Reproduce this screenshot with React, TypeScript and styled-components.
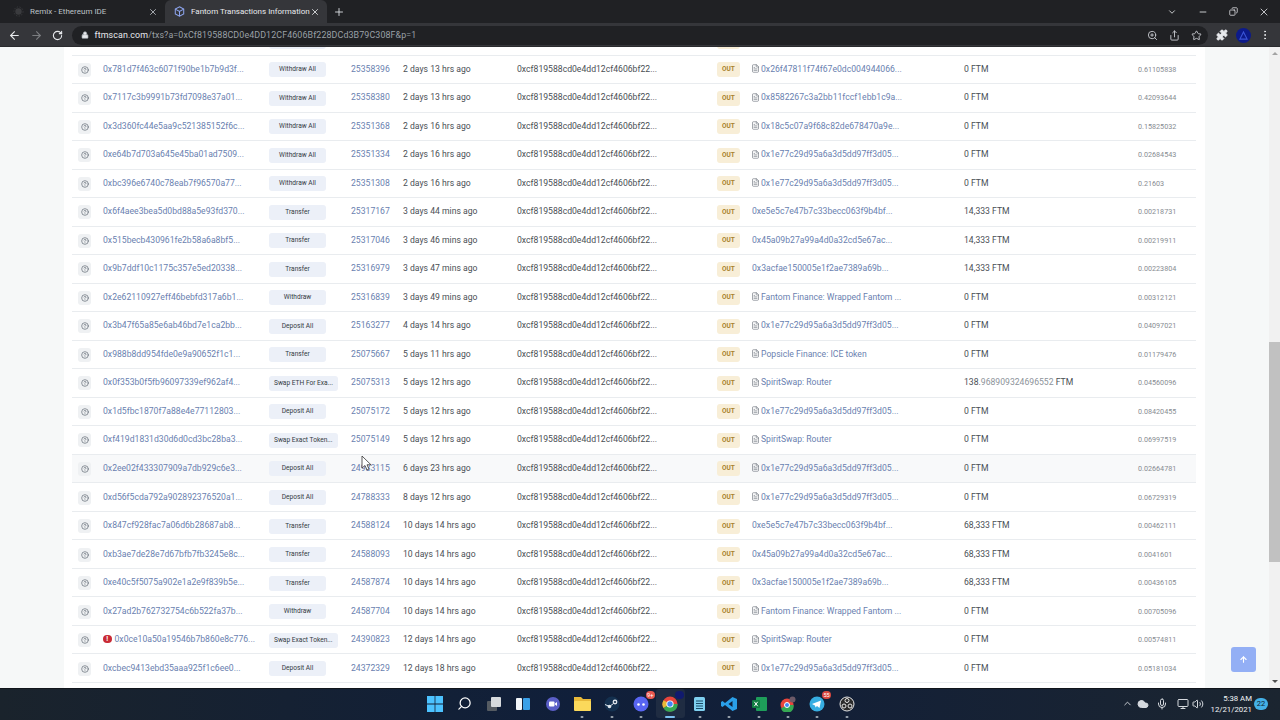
import * as React from 'react';
import styled, {createGlobalStyle} from 'styled-components';
import {ArrowLeft, ArrowRight, RotateCw, Lock, ZoomIn, Share, Star, Puzzle, MoreVertical, X, Plus, ChevronDown, Minus, Copy, ArrowUp, FileText, HelpCircle, Search, Mic, Volume2, ChevronUp, Cloud, Monitor} from 'lucide-react';

const GlobalStyle = createGlobalStyle`
  html, body { margin: 0; padding: 0; width: 1280px; height: 720px; overflow: hidden; background: #f6f8f8; }
  body { font-family: Roboto, "Liberation Sans", sans-serif; }
`;

type Tx = {
    hash: string;
    method: string;
    block: string;
    age: string;
    to: string;
    contract?: boolean;
    value: string;
    fee: string;
    failed?: boolean;
    hover?: boolean;
};

const from = '0xcf819588cd0e4dd12cf4606bf22...';
const vault = '0x1e77c29d95a6a3d5dd97ff3d05...';
const wftm = 'Fantom Finance: Wrapped Fantom ...';
const router = 'SpiritSwap: Router';

const txs: Tx[] = [
    {hash: '0x781d7f463c6071f90be1b7b9d3f...', method: 'Withdraw All', block: '25358396', age: '2 days 13 hrs ago', to: '0x26f47811f74f67e0dc004944066...', contract: true, value: '0 FTM', fee: '0.61105838'},
    {hash: '0x7117c3b9991b73fd7098e37a01...', method: 'Withdraw All', block: '25358380', age: '2 days 13 hrs ago', to: '0x8582267c3a2bb11fccf1ebb1c9a...', contract: true, value: '0 FTM', fee: '0.42093644'},
    {hash: '0x3d360fc44e5aa9c521385152f6c...', method: 'Withdraw All', block: '25351368', age: '2 days 16 hrs ago', to: '0x18c5c07a9f68c82de678470a9e...', contract: true, value: '0 FTM', fee: '0.15825032'},
    {hash: '0xe64b7d703a645e45ba01ad7509...', method: 'Withdraw All', block: '25351334', age: '2 days 16 hrs ago', to: vault, contract: true, value: '0 FTM', fee: '0.02684543'},
    {hash: '0xbc396e6740c78eab7f96570a77...', method: 'Withdraw All', block: '25351308', age: '2 days 16 hrs ago', to: vault, contract: true, value: '0 FTM', fee: '0.21603'},
    {hash: '0x6f4aee3bea5d0bd88a5e93fd370...', method: 'Transfer', block: '25317167', age: '3 days 44 mins ago', to: '0xe5e5c7e47b7c33becc063f9b4bf...', value: '14,333 FTM', fee: '0.00218731'},
    {hash: '0x515becb430961fe2b58a6a8bf5...', method: 'Transfer', block: '25317046', age: '3 days 46 mins ago', to: '0x45a09b27a99a4d0a32cd5e67ac...', value: '14,333 FTM', fee: '0.00219911'},
    {hash: '0x9b7ddf10c1175c357e5ed20338...', method: 'Transfer', block: '25316979', age: '3 days 47 mins ago', to: '0x3acfae150005e1f2ae7389a69b...', value: '14,333 FTM', fee: '0.00223804'},
    {hash: '0x2e62110927eff46bebfd317a6b1...', method: 'Withdraw', block: '25316839', age: '3 days 49 mins ago', to: wftm, contract: true, value: '0 FTM', fee: '0.00312121'},
    {hash: '0x3b47f65a85e6ab46bd7e1ca2bb...', method: 'Deposit All', block: '25163277', age: '4 days 14 hrs ago', to: vault, contract: true, value: '0 FTM', fee: '0.04097021'},
    {hash: '0x988b8dd954fde0e9a90652f1c1...', method: 'Transfer', block: '25075667', age: '5 days 11 hrs ago', to: 'Popsicle Finance: ICE token', contract: true, value: '0 FTM', fee: '0.01179476'},
    {hash: '0x0f353b0f5fb96097339ef962af4...', method: 'Swap ETH For Exa...', block: '25075313', age: '5 days 12 hrs ago', to: router, contract: true, value: '138.968909324696552 FTM', fee: '0.04560096'},
    {hash: '0x1d5fbc1870f7a88e4e77112803...', method: 'Deposit All', block: '25075172', age: '5 days 12 hrs ago', to: vault, contract: true, value: '0 FTM', fee: '0.08420455'},
    {hash: '0xf419d1831d30d6d0cd3bc28ba3...', method: 'Swap Exact Token...', block: '25075149', age: '5 days 12 hrs ago', to: router, contract: true, value: '0 FTM', fee: '0.06997519'},
    {hash: '0x2ee02f433307909a7db929c6e3...', method: 'Deposit All', block: '24983115', age: '6 days 23 hrs ago', to: vault, contract: true, value: '0 FTM', fee: '0.02664781', hover: true},
    {hash: '0xd56f5cda792a902892376520a1...', method: 'Deposit All', block: '24788333', age: '8 days 12 hrs ago', to: vault, contract: true, value: '0 FTM', fee: '0.06729319'},
    {hash: '0x847cf928fac7a06d6b28687ab8...', method: 'Transfer', block: '24588124', age: '10 days 14 hrs ago', to: '0xe5e5c7e47b7c33becc063f9b4bf...', value: '68,333 FTM', fee: '0.00462111'},
    {hash: '0xb3ae7de28e7d67bfb7fb3245e8c...', method: 'Transfer', block: '24588093', age: '10 days 14 hrs ago', to: '0x45a09b27a99a4d0a32cd5e67ac...', value: '68,333 FTM', fee: '0.0041601'},
    {hash: '0xe40c5f5075a902e1a2e9f839b5e...', method: 'Transfer', block: '24587874', age: '10 days 14 hrs ago', to: '0x3acfae150005e1f2ae7389a69b...', value: '68,333 FTM', fee: '0.00436105'},
    {hash: '0x27ad2b762732754c6b522fa37b...', method: 'Withdraw', block: '24587704', age: '10 days 14 hrs ago', to: wftm, contract: true, value: '0 FTM', fee: '0.00705096'},
    {hash: '0x0ce10a50a19546b7b860e8c776...', method: 'Swap Exact Token...', block: '24390823', age: '12 days 14 hrs ago', to: router, contract: true, value: '0 FTM', fee: '0.00574811', failed: true},
    {hash: '0xcbec9413ebd35aaa925f1c6ee0...', method: 'Deposit All', block: '24372329', age: '12 days 18 hrs ago', to: vault, contract: true, value: '0 FTM', fee: '0.05181034'},
];

const Screen = styled.div`
  width: 1280px;
  height: 720px;
  display: flex;
  flex-direction: column;
  position: relative;
  overflow: hidden;
`;

const TabBar = styled.div`
  height: 23px;
  flex: none;
  background: #202124;
  display: flex;
  align-items: flex-end;
  color: #dee1e6;
  font-size: 8px;
`;

const Tab = styled.div<{$active?: boolean}>`
  width: ${p => p.$active ? '162px' : '157px'};
  height: 23px;
  padding: 0 7px 0 ${p => p.$active ? '9px' : '5px'};
  margin-left: ${p => p.$active ? '0' : '8px'};
  box-sizing: border-box;
  display: flex;
  align-items: center;
  gap: 6px;
  border-radius: 6px 6px 0 0;
  background: ${p => p.$active ? '#35363a' : 'transparent'};
  color: ${p => p.$active ? '#e8eaed' : '#bdc1c6'};
`;

const TabTitle = styled.span`
  flex: 1;
  min-width: 0;
  white-space: nowrap;
`;

const NewTab = styled.div`
  width: 24px;
  height: 23px;
  display: flex;
  align-items: center;
  justify-content: center;
`;

const WindowControls = styled.div`
  margin-left: auto;
  height: 23px;
  padding-right: 1px;
  display: flex;
  align-items: center;
  color: #e8eaed;
`;

const WindowButton = styled.div`
  width: 30.5px;
  display: flex;
  justify-content: center;
`;

const RestoreIcon = styled(Copy)`
  transform: scaleX(-1);
`;

const Toolbar = styled.div`
  height: 24px;
  flex: none;
  background: #35363a;
  display: flex;
  align-items: center;
  color: #e8eaed;
  box-shadow: inset 0 -1px 0 #2a2b2e;
`;

const NavButton = styled.div<{$dim?: boolean}>`
  width: 21.5px;
  display: flex;
  justify-content: center;
  color: ${p => p.$dim ? '#7b7d80' : '#e8eaed'};
  &:first-child { margin-left: 4px; }
`;

const Omnibox = styled.div`
  width: 1136px;
  height: 19px;
  margin-left: 3px;
  border-radius: 10px;
  background: #202124;
  display: flex;
  align-items: center;
  box-sizing: border-box;
  padding: 0 6px 0 9px;
  font-size: 8.9px;
  color: #9aa0a6;
  letter-spacing: .1px;
`;

const LockIcon = styled(Lock)`
  margin-right: 6px;
`;

const Domain = styled.span`
  color: #e8eaed;
`;

const OmniIcons = styled.div`
  margin-left: auto;
  display: flex;
  gap: 11px;
  color: #c8cbd0;
`;

const ToolbarEnd = styled.div`
  display: flex;
  align-items: center;
  gap: 8px;
  margin-left: 8px;
`;

const Avatar = styled.div`
  width: 15px;
  height: 15px;
  border-radius: 50%;
  background: #0c1a8a;
  display: flex;
  align-items: center;
  justify-content: center;
`;

const Page = styled.div`
  flex: 1;
  min-height: 0;
  display: flex;
  background: #f6f8f8;
`;

const Content = styled.div`
  flex: 1;
  padding-left: 64px;
  overflow: hidden;
`;

const Card = styled.div`
  width: 1141px;
  background: #fff;
  padding: 0 8px 20px 8px;
  box-sizing: border-box;
  margin-top: -20px;
`;

const Row = styled.div<{$hover?: boolean}>`
  display: grid;
  grid-template-columns: 31px 166px 82px 52px 114px 200px 35px 212px 174px 58px;
  align-items: center;
  width: 1124px;
  height: 28.52px;
  box-sizing: border-box;
  border-bottom: 1px solid #e9ecef;
  background: ${p => p.$hover ? '#f8f9fa' : 'transparent'};
  font-size: 8.65px;
  color: #4a4f55;
  white-space: nowrap;
`;

const HelpChip = styled.div`
  width: 13px;
  height: 14px;
  margin-left: 6px;
  margin-top: 1px;
  border-radius: 3px;
  background: #eff1f3;
  color: #5c6570;
  display: flex;
  align-items: center;
  justify-content: center;
`;

const HashCell = styled.div`
  display: flex;
  align-items: center;
  gap: 3px;
  color: #6a7fb0;
  margin-top: -1px;
`;

const ErrorDot = styled.span`
  width: 8.5px;
  height: 8.5px;
  border-radius: 50%;
  background: #c92a35;
  color: #fff;
  font-size: 7px;
  font-weight: 700;
  line-height: 8.5px;
  text-align: center;
`;

const MethodCell = styled.div`
  display: flex;
  margin-top: 1px;
`;

const MethodBadge = styled.span`
  min-width: 57px;
  height: 15px;
  padding: 0 5px;
  box-sizing: border-box;
  border-radius: 3px;
  background: #ecf0f8;
  color: #333a42;
  font-size: 6.6px;
  text-align: center;
  line-height: 15px;
`;

const BlockCell = styled.div`
  color: #6a7fb0;
  margin-top: -1px;
`;

const TextCell = styled.div`
  margin-top: -1px;
`;

const OutBadge = styled.span`
  width: 23px;
  height: 15px;
  margin-top: 1px;
  border-radius: 3px;
  background: #f8eed7;
  color: #a9822c;
  font-size: 6.5px;
  font-weight: 700;
  text-align: center;
  line-height: 15px;
`;

const ToCell = styled.div`
  display: flex;
  align-items: center;
  gap: 1px;
  color: #6a7fb0;
  margin-top: -1px;
  svg { color: #59616b; margin-left: -1px; }
`;

const Dim = styled.span`
  color: #8d939a;
`;

const FeeCell = styled.div`
  font-size: 7.2px;
  color: #878c92;
`;

const Scrollbar = styled.div`
  width: 11px;
  flex: none;
  background: #f1f1f1;
  display: flex;
  flex-direction: column;
  align-items: center;
`;

const ScrollArrow = styled.div<{$down?: boolean}>`
  width: 0;
  height: 0;
  border-left: 3px solid transparent;
  border-right: 3px solid transparent;
  ${p => p.$down ? 'border-top: 3px solid #505050;' : 'border-bottom: 3px solid #a3a3a3;'}
  margin: 5px 0;
`;

const ScrollThumb = styled.div`
  width: 100%;
  height: 220px;
  margin-top: 282px;
  margin-bottom: auto;
  background: #c1c1c1;
`;

const ToTop = styled.div`
  position: absolute;
  left: 1231px;
  top: 647px;
  width: 25px;
  height: 25px;
  border-radius: 3px;
  background: #93aff5;
  color: #fff;
  display: flex;
  align-items: center;
  justify-content: center;
`;

const Pointer = styled.svg`
  position: absolute;
  left: 361px;
  top: 455px;
`;

const Taskbar = styled.div`
  height: 32px;
  flex: none;
  background: linear-gradient(90deg, #1a232c 0%, #101f3a 45%, #121f38 60%, #1b2530 100%);
  border-top: 1px solid #11151b;
  box-sizing: border-box;
  padding-bottom: 2px;
  display: grid;
  grid-template-columns: 1fr auto 1fr;
  align-items: center;
  color: #fff;
`;

const TaskIcons = styled.div`
  grid-column: 2;
  margin-left: 2px;
  display: flex;
  align-items: center;
`;

const TaskIcon = styled.div<{$active?: boolean; $open?: boolean}>`
  width: 29.4px;
  height: 29px;
  display: flex;
  align-items: center;
  justify-content: center;
  position: relative;
  background: ${p => p.$active ? '#1f2c42' : 'transparent'};
  border-radius: 3px;
  &::after {
    content: '';
    display: ${p => p.$open || p.$active ? 'block' : 'none'};
    position: absolute;
    bottom: 0;
    left: 50%;
    height: 2px;
    width: ${p => p.$active ? '10px' : '3px'};
    transform: translateX(-50%);
    border-radius: 1px;
    background: ${p => p.$active ? '#7cc0f0' : '#9aa3ad'};
  }
`;

const SearchIcon = styled(Search)`
  transform: scaleX(-1);
`;

const Count = styled.span<{$bg: string}>`
  position: absolute;
  top: 2px;
  right: 1px;
  min-width: 9px;
  height: 8px;
  border-radius: 4px;
  background: ${p => p.$bg};
  color: #fff;
  font-size: 5.5px;
  line-height: 8px;
  text-align: center;
`;

const Tray = styled.div`
  grid-column: 3;
  justify-self: end;
  display: flex;
  align-items: center;
  padding-right: 12px;
  color: #d5d9de;
`;

const TrayIcon = styled.div<{$gap: number}>`
  display: flex;
  margin-left: ${p => p.$gap}px;
`;

const Clock = styled.div`
  font-size: 7.8px;
  line-height: 11px;
  text-align: right;
  color: #f2f4f6;
  margin-left: 7px;
`;

const Notify = styled.div`
  width: 14px;
  height: 12px;
  border-radius: 6px;
  background: #44b0e6;
  color: #10202e;
  font-size: 7.5px;
  line-height: 12px;
  text-align: center;
  margin-left: 2px;
`;

const TxRow = ({tx}: {tx: Tx}) => {
    const dot = tx.value.indexOf('.');
    return <Row $hover={tx.hover}>
        <HelpChip><HelpCircle size={8} strokeWidth={2}/></HelpChip>
        <HashCell>
            {tx.failed && <ErrorDot>!</ErrorDot>}
            {tx.hash}
        </HashCell>
        <MethodCell><MethodBadge>{tx.method}</MethodBadge></MethodCell>
        <BlockCell>{tx.block}</BlockCell>
        <TextCell>{tx.age}</TextCell>
        <TextCell>{from}</TextCell>
        <OutBadge>OUT</OutBadge>
        <ToCell>
            {tx.contract && <FileText size={9} strokeWidth={1.5}/>}
            {tx.to}
        </ToCell>
        <TextCell>
            {dot > 0
                ? <>{tx.value.slice(0, dot)}.<Dim>{tx.value.slice(dot + 1, -4)}</Dim>{tx.value.slice(-4)}</>
                : tx.value}
        </TextCell>
        <FeeCell>{tx.fee}</FeeCell>
    </Row>;
};

// only the bottom edge of this row shows under the toolbar, so its badges stay empty
const ScrolledOffRow = () => <Row>
    <span/>
    <span/>
    <MethodCell><MethodBadge/></MethodCell>
    <span/>
    <span/>
    <span/>
    <OutBadge/>
</Row>;

const App = () => {
    return <Screen>
        <GlobalStyle/>
        <TabBar>
            <Tab>
                <svg width="11" height="11" viewBox="0 0 12 12"><circle cx="6" cy="6" r="3.5" fill="#3a3b3e"/><circle cx="6" cy="6" r="5" fill="none" stroke="#3a3b3e" strokeDasharray="1.5 1.5"/></svg>
                <TabTitle>Remix - Ethereum IDE</TabTitle>
                <X size={10} strokeWidth={2}/>
            </Tab>
            <Tab $active>
                <svg width="11" height="11" viewBox="0 0 12 12" fill="none" stroke="#8ea6f0" strokeWidth="1.1"><path d="M6 .8 10.6 3.4V8.6L6 11.2 1.4 8.6V3.4Z"/><path d="M1.4 3.4 6 6l4.6-2.6M6 6v5.2"/></svg>
                <TabTitle>Fantom Transactions Information</TabTitle>
                <X size={10} strokeWidth={2}/>
            </Tab>
            <NewTab><Plus size={12} strokeWidth={1.8}/></NewTab>
            <WindowControls>
                <WindowButton><ChevronDown size={10}/></WindowButton>
                <WindowButton><Minus size={10}/></WindowButton>
                <WindowButton><RestoreIcon size={9}/></WindowButton>
                <WindowButton><X size={12} strokeWidth={1.6}/></WindowButton>
            </WindowControls>
        </TabBar>
        <Toolbar>
            <NavButton><ArrowLeft size={13}/></NavButton>
            <NavButton $dim><ArrowRight size={13}/></NavButton>
            <NavButton><RotateCw size={11} strokeWidth={2.4}/></NavButton>
            <Omnibox>
                <LockIcon size={8} fill="#e8eaed"/>
                <Domain>ftmscan.com</Domain>
                <span>/txs?a=0xCf819588CD0e4DD12CF4606Bf228DCd3B79C308F&amp;p=1</span>
                <OmniIcons>
                    <ZoomIn size={11}/>
                    <Share size={11}/>
                    <Star size={11}/>
                </OmniIcons>
            </Omnibox>
            <ToolbarEnd>
                <Puzzle size={12} fill="#e8eaed"/>
                <Avatar>
                    <svg width="9" height="9" viewBox="0 0 10 10" fill="none" stroke="#3b55d8" strokeWidth="1.2"><path d="M5 1 9 9H1Z"/></svg>
                </Avatar>
                <MoreVertical size={12}/>
            </ToolbarEnd>
        </Toolbar>
        <Page>
            <Content>
                <Card>
                    <ScrolledOffRow/>
                    {txs.map(tx => <TxRow key={tx.hash} tx={tx}/>)}
                </Card>
            </Content>
            <Scrollbar>
                <ScrollArrow/>
                <ScrollThumb/>
                <ScrollArrow $down/>
            </Scrollbar>
        </Page>
        <ToTop><ArrowUp size={9} strokeWidth={3}/></ToTop>
        <Pointer width="11" height="16" viewBox="0 0 11 16"><path d="M1 1V13L4 10.5 6 15 8 14 6 9.8H10Z" fill="#fff" stroke="#333" strokeWidth=".8"/></Pointer>
        <Taskbar>
            <TaskIcons>
                <TaskIcon>
                    <svg width="16" height="16" viewBox="0 0 16 16" fill="#4cc2ff"><path d="M0 0h7.6v7.6H0zM8.400 0H16v7.6H8.400zM0 8.400h7.6V16H0zM8.400 8.400H16V16H8.400z"/></svg>
                </TaskIcon>
                <TaskIcon><SearchIcon size={15} strokeWidth={2}/></TaskIcon>
                <TaskIcon>
                    <svg width="16" height="16" viewBox="0 0 16 16"><rect x="1" y="5" width="10" height="10" rx="1" fill="#555b62"/><rect x="5" y="1" width="10" height="10" rx="1" fill="#d7dadd"/></svg>
                </TaskIcon>
                <TaskIcon>
                    <svg width="16" height="16" viewBox="0 0 16 16"><rect x="1" y="2" width="6" height="12" rx="1" fill="#f2f6fa"/><rect x="8" y="2" width="7" height="12" rx="1" fill="#3aa0e8"/></svg>
                </TaskIcon>
                <TaskIcon>
                    <svg width="16" height="16" viewBox="0 0 16 16"><circle cx="8" cy="8" r="7" fill="#5b5fc7"/><rect x="4" y="5.500" width="5.500" height="5" rx="1" fill="#fff"/><path d="M10 7.500 12 6v4L10 8.500Z" fill="#fff"/></svg>
                </TaskIcon>
                <TaskIcon $open>
                    <svg width="17" height="15" viewBox="0 0 17 15"><path d="M0 1h7l2 2h8v3H0z" fill="#e8b93a"/><rect y="5" width="17" height="10" rx="1" fill="#fbd95b"/></svg>
                </TaskIcon>
                <TaskIcon $open>
                    <svg width="16" height="16" viewBox="0 0 16 16"><circle cx="8" cy="8" r="7.500" fill="#14304f"/><circle cx="11" cy="6" r="2.400" fill="#dfe5ec"/><circle cx="11" cy="6" r="1.100" fill="#14304f"/><circle cx="5.500" cy="10.500" r="1.800" fill="#dfe5ec"/><path d="M1 8.500 5.500 10.500 9.500 7.500" stroke="#dfe5ec" fill="none"/></svg>
                </TaskIcon>
                <TaskIcon $open>
                    <svg width="16" height="16" viewBox="0 0 16 16"><circle cx="8" cy="8" r="7.500" fill="#5865f2"/><circle cx="5.500" cy="8.500" r="1.300" fill="#fff"/><circle cx="10.500" cy="8.500" r="1.300" fill="#fff"/></svg>
                    <Count $bg="#e8574f">9+</Count>
                </TaskIcon>
                <TaskIcon $active>
                    <svg width="16" height="16" viewBox="0 0 16 16"><circle cx="8" cy="8" r="7.500" fill="#e8453c"/><path d="M8 8 1.500 12A7.500 7.500 0 0 1 1.500 4.300Z" fill="#e8b93a"/><path d="M8 8 1.500 12A7.500 7.500 0 0 0 15.500 8H8Z" fill="#36a853"/><circle cx="8" cy="8" r="3.600" fill="#fff"/><circle cx="8" cy="8" r="2.700" fill="#4285f4"/></svg>
                    <Count $bg="#101a6e" />
                </TaskIcon>
                <TaskIcon $open>
                    <svg width="13" height="16" viewBox="0 0 13 16" fill="none"><rect x="1" y="1" width="11" height="14" rx="1.500" fill="#7fd0f0"/><path d="M3 5h7M3 7.500h7M3 10h7M3 12.500h7" stroke="#1a4a66"/></svg>
                </TaskIcon>
                <TaskIcon $open>
                    <svg width="16" height="16" viewBox="0 0 16 16"><path d="M11.500 1 16 3v10l-4.500 2L4 9l-2.500 2L0 10V6l1.500-1L4 7Zm0 4L7.500 8l4 3Z" fill="#2a9fe8"/></svg>
                </TaskIcon>
                <TaskIcon $open>
                    <svg width="16" height="16" viewBox="0 0 16 16"><rect x="5" y="1" width="11" height="14" rx="1" fill="#1e9e5a"/><rect x="1" y="4" width="8" height="8" rx="1" fill="#107c41"/><path d="M3.300 5.800 6.700 10.200M6.700 5.800 3.300 10.200" stroke="#fff"/></svg>
                </TaskIcon>
                <TaskIcon $open>
                    <svg width="16" height="16" viewBox="0 0 16 16"><circle cx="7" cy="9" r="6.500" fill="#e8453c"/><path d="M7 9 1 12.500A6.500 6.500 0 0 0 13.500 9Z" fill="#36a853"/><circle cx="7" cy="9" r="2.500" fill="#4285f4" stroke="#fff"/><circle cx="12.500" cy="3.500" r="3" fill="#6d5a68"/></svg>
                </TaskIcon>
                <TaskIcon $open>
                    <svg width="16" height="16" viewBox="0 0 16 16"><circle cx="8" cy="8" r="7.500" fill="#37aee2"/><path d="M3 8 12 4.500 10.500 12 8 10l-1.500 1.500L6 9.500Z" fill="#fff"/></svg>
                    <Count $bg="#d9483f">55</Count>
                </TaskIcon>
                <TaskIcon $open>
                    <svg width="16" height="16" viewBox="0 0 16 16" fill="none" stroke="#e6e6e6"><circle cx="8" cy="8" r="7" fill="#2c2c2c"/><circle cx="8" cy="4.500" r="2"/><circle cx="5" cy="10" r="2"/><circle cx="11" cy="10" r="2"/></svg>
                </TaskIcon>
            </TaskIcons>
            <Tray>
                <TrayIcon $gap={0}><ChevronUp size={11}/></TrayIcon>
                <TrayIcon $gap={4}><Cloud size={12} fill="#d5d9de"/></TrayIcon>
                <TrayIcon $gap={7}><Mic size={12}/></TrayIcon>
                <TrayIcon $gap={9}><Monitor size={12}/></TrayIcon>
                <TrayIcon $gap={3}><Volume2 size={12}/></TrayIcon>
                <Clock>5:38 AM<br/>12/21/2021</Clock>
                <Notify>22</Notify>
            </Tray>
        </Taskbar>
    </Screen>;
};

export default App;
